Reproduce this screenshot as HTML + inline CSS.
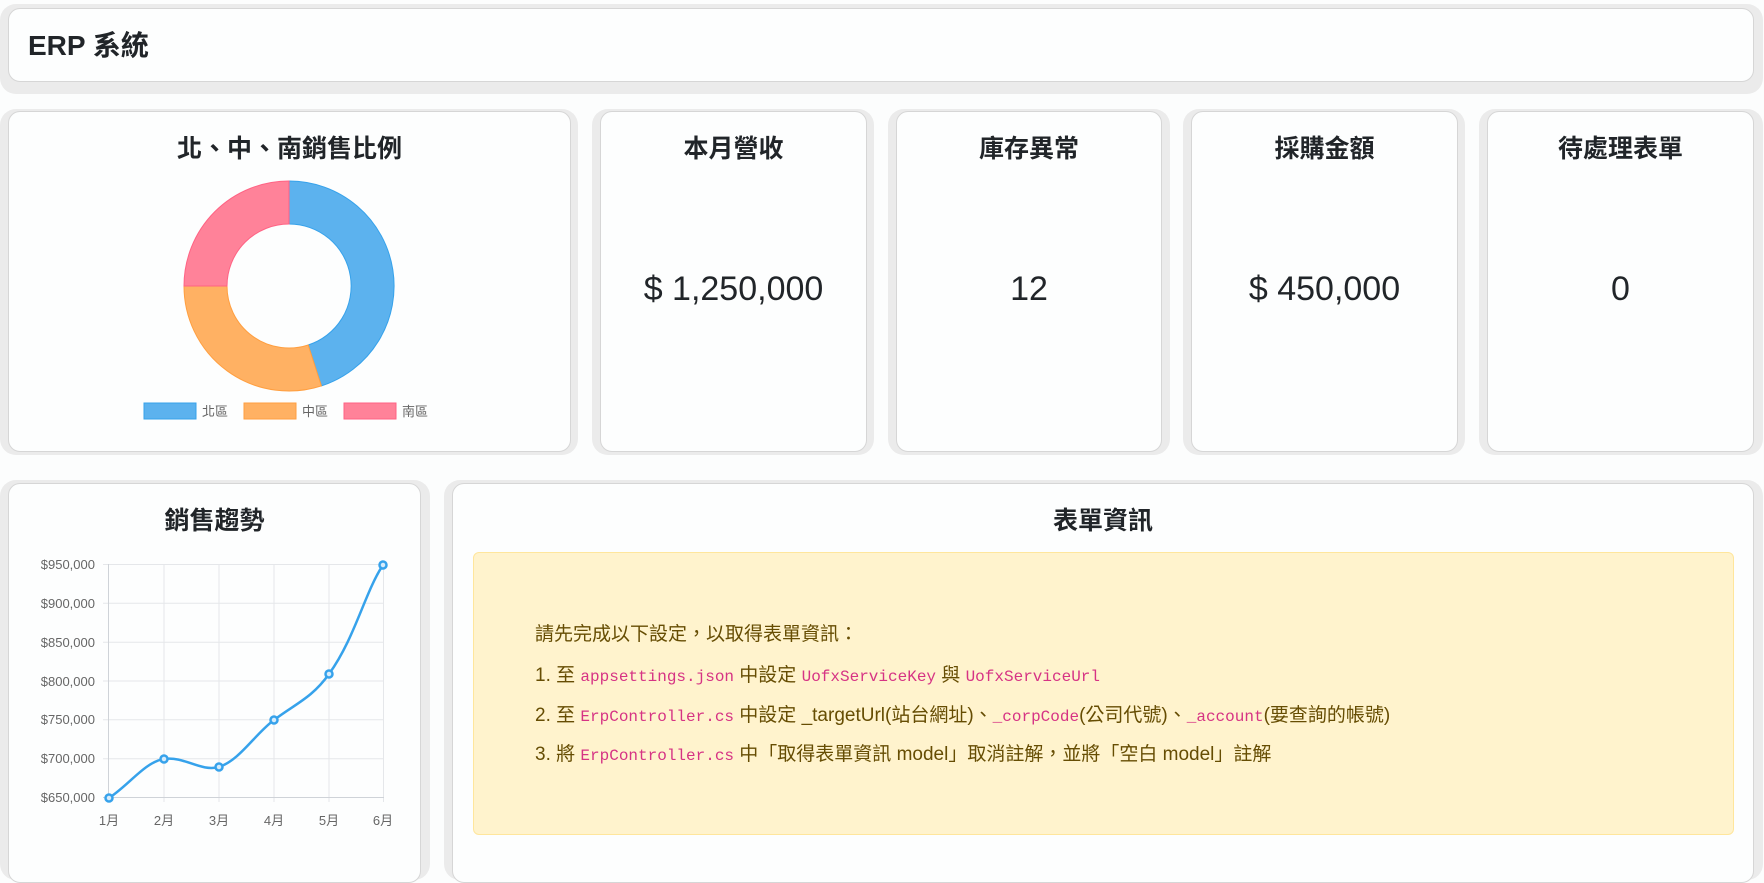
<!DOCTYPE html>
<html><head><meta charset="utf-8"><style>
body{margin:0;width:1764px;height:876px;background:#fcfdfd;overflow:hidden;position:relative;font-family:"Liberation Sans","Noto Sans CJK TC",sans-serif;color:#212529}
.o{position:absolute;background:#ebebeb;border-radius:16px}
.c{position:absolute;background:#fdfefe;border:1px solid #d6d6d6;border-radius:12px;box-sizing:border-box}
.t{position:absolute;left:0;right:0;text-align:center;font-size:25px;font-weight:bold;font-family:"Noto Sans CJK TC",sans-serif;line-height:30px}
.v{position:absolute;left:0;right:0;text-align:center;font-size:34px;top:158px}
code{font-family:"Liberation Mono",monospace;color:#d63384;font-size:16px}
.al{position:absolute;left:473px;top:552px;width:1261px;height:283px;background:#fff3cd;border:1px solid #ffe69c;border-radius:6px;box-sizing:border-box;color:#664d03;font-size:19px;font-family:"Liberation Sans","Noto Sans CJK TC",sans-serif}
.al div{position:absolute;left:61px;white-space:nowrap}
</style></head><body>
<div class="o" style="left:0;top:4px;width:1763px;height:90px"></div>
<div class="c" style="left:8px;top:8px;width:1746px;height:74px"><div style="position:absolute;left:19px;top:15px;font-size:28px;font-weight:bold;font-family:'Liberation Sans','Noto Sans CJK TC',sans-serif">ERP 系統</div></div>

<div class="o" style="left:0;top:109px;width:578px;height:346px"></div>
<div class="c" style="left:8px;top:111px;width:563px;height:341px">
<div class="t" style="top:20px">北、中、南銷售比例</div></div>
<svg style="position:absolute;left:0;top:0" width="600" height="460">
<path d="M289 181 A105 105 0 0 1 321.4 385.9 L308.2 345 A62 62 0 0 0 289 224 Z" fill="#5cb2ee" stroke="#36a2eb"/>
<path d="M321.4 385.9 A105 105 0 0 1 184 286 L227 286 A62 62 0 0 0 308.2 345 Z" fill="#ffb163" stroke="#ff9f40"/>
<path d="M184 286 A105 105 0 0 1 289 181 L289 224 A62 62 0 0 0 227 286 Z" fill="#ff8299" stroke="#ff6384"/>
<rect x="144" y="403" width="52" height="16" fill="#5cb2ee" stroke="#36a2eb"/>
<rect x="244" y="403" width="52" height="16" fill="#ffb163" stroke="#ff9f40"/>
<rect x="344" y="403" width="52" height="16" fill="#ff8299" stroke="#ff6384"/>
<g font-size="13" fill="#666" font-family="Liberation Sans,Noto Sans CJK TC,sans-serif"><text x="202" y="416">北區</text><text x="302" y="416">中區</text><text x="402" y="416">南區</text></g>
</svg>

<div class="o" style="left:592px;top:109px;width:282px;height:346px"></div>
<div class="c" style="left:600px;top:111px;width:267px;height:341px"><div class="t" style="top:20px">本月營收</div><div class="v">$ 1,250,000</div></div>
<div class="o" style="left:888px;top:109px;width:282px;height:346px"></div>
<div class="c" style="left:896px;top:111px;width:266px;height:341px"><div class="t" style="top:20px">庫存異常</div><div class="v">12</div></div>
<div class="o" style="left:1183px;top:109px;width:282px;height:346px"></div>
<div class="c" style="left:1191px;top:111px;width:267px;height:341px"><div class="t" style="top:20px">採購金額</div><div class="v">$ 450,000</div></div>
<div class="o" style="left:1479px;top:109px;width:284px;height:346px"></div>
<div class="c" style="left:1487px;top:111px;width:267px;height:341px"><div class="t" style="top:20px">待處理表單</div><div class="v">0</div></div>

<div class="o" style="left:0;top:480px;width:430px;height:400px"></div>
<div class="c" style="left:8px;top:483px;width:413px;height:400px"><div class="t" style="top:20px">銷售趨勢</div></div>
<svg style="position:absolute;left:0;top:540px" width="430" height="300">
<g stroke="#e5e7ea" stroke-width="1">
<line x1="103" y1="24.5" x2="383" y2="24.5"/><line x1="103" y1="63.3" x2="383" y2="63.3"/><line x1="103" y1="102.2" x2="383" y2="102.2"/><line x1="103" y1="141" x2="383" y2="141"/><line x1="103" y1="179.8" x2="383" y2="179.8"/><line x1="103" y1="218.7" x2="383" y2="218.7"/>
<line x1="164" y1="24" x2="164" y2="262"/><line x1="219" y1="24" x2="219" y2="262"/><line x1="274" y1="24" x2="274" y2="262"/><line x1="329" y1="24" x2="329" y2="262"/><line x1="383.5" y1="24" x2="383.5" y2="262"/>
</g>
<g stroke="#cfd3d8"><line x1="108.5" y1="24" x2="108.5" y2="262"/><line x1="103" y1="257.5" x2="384" y2="257.5"/></g>
<g font-size="13" fill="#666" text-anchor="end" font-family="Liberation Sans,sans-serif">
<text x="95" y="29">$950,000</text><text x="95" y="68">$900,000</text><text x="95" y="107">$850,000</text><text x="95" y="146">$800,000</text><text x="95" y="184">$750,000</text><text x="95" y="223">$700,000</text><text x="95" y="262">$650,000</text></g>
<g font-size="13" fill="#666" text-anchor="middle" font-family="Liberation Sans,Noto Sans CJK TC,sans-serif">
<text x="109" y="285">1月</text><text x="164" y="285">2月</text><text x="219" y="285">3月</text><text x="274" y="285">4月</text><text x="329" y="285">5月</text><text x="383" y="285">6月</text></g>
<path d="M109 258 C130 244,145 222,164 219 C185 216,200 232,219 227 C240 220,255 194,274 180 C295 164,312 158,329 134 C355 98,365 52,383 25" fill="none" stroke="#36a2eb" stroke-width="2.5"/>
<g fill="#d7ecfb" stroke="#36a2eb" stroke-width="2.5"><circle cx="109" cy="258" r="3.5"/><circle cx="164" cy="219" r="3.5"/><circle cx="219" cy="227" r="3.5"/><circle cx="274" cy="180" r="3.5"/><circle cx="329" cy="134" r="3.5"/><circle cx="383" cy="25" r="3.5"/></g>
</svg>

<div class="o" style="left:444px;top:480px;width:1319px;height:400px"></div>
<div class="c" style="left:452px;top:483px;width:1302px;height:400px"><div class="t" style="top:20px">表單資訊</div></div>
<div class="al">
<div style="top:66px">請先完成以下設定，以取得表單資訊：</div>
<div style="top:107px">1. 至 <code>appsettings.json</code> 中設定 <code>UofxServiceKey</code> 與 <code>UofxServiceUrl</code></div>
<div style="top:147px">2. 至 <code>ErpController.cs</code> 中設定 _targetUrl(站台網址)、<code>_corpCode</code>(公司代號)、<code>_account</code>(要查詢的帳號)</div>
<div style="top:186px">3. 將 <code>ErpController.cs</code> 中「取得表單資訊 model」取消註解，並將「空白 model」註解</div>
</div>
</body></html>
